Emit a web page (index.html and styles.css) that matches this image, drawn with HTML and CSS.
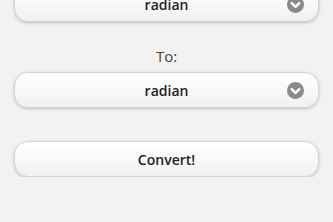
FILE: index.html
```html
<!DOCTYPE html>
<html lang="en">

<head>
    <meta charset="UTF-8">
    <meta name="viewport" content="width=device-width, initial-scale=1.0">
    <title>Angle Converter</title>
    <link rel="stylesheet" href="styles.css">
</head>

<body>
    <div class="form">
        <div class="select">
            <span class="select-text">radian</span>
            <span class="select-icon">
                <svg width="17" height="17" viewBox="0 0 18 18">
                    <circle cx="9" cy="9" r="9" fill="#8a8a8a"/>
                    <path d="M5 7.5 L9 11.5 L13 7.5" fill="none" stroke="#fff" stroke-width="2.6" stroke-linecap="round" stroke-linejoin="round"/>
                </svg>
            </span>
        </div>

        <label class="label">To:</label>

        <div class="select">
            <span class="select-text">radian</span>
            <span class="select-icon">
                <svg width="17" height="17" viewBox="0 0 18 18">
                    <circle cx="9" cy="9" r="9" fill="#8a8a8a"/>
                    <path d="M5 7.5 L9 11.5 L13 7.5" fill="none" stroke="#fff" stroke-width="2.6" stroke-linecap="round" stroke-linejoin="round"/>
                </svg>
            </span>
        </div>

        <button class="button">Convert!</button>
    </div>
</body>

</html>
```

FILE: styles.css
```css
body {
    margin: 0;
    background-color: #f2f2f2;
    font-family: "Open Sans", "Noto Sans", sans-serif;
    color: #333333;
    overflow: hidden;
}

.form {
    display: flex;
    flex-direction: column;
    padding: 0 14px;
    margin-top: -14px;
}

.select,
.button {
    position: relative;
    height: 36px;
    box-sizing: border-box;
    border: 1px solid #d2d2d2;
    border-radius: 14px;
    background: linear-gradient(#ffffff, #f1f1f1);
    box-shadow: 0 1px 3px rgba(0, 0, 0, 0.22);
    display: flex;
    align-items: center;
    justify-content: center;
    font-family: inherit;
    font-size: 14px;
    font-weight: 600;
    color: #222222;
}

.select-icon {
    position: absolute;
    right: 14px;
    top: 9px;
    line-height: 0;
}

.label {
    text-align: center;
    font-size: 15px;
    color: #444444;
    margin: 24px 0 6px;
}

.button {
    margin-top: 33px;
    width: 100%;
    padding: 0;
}
```
